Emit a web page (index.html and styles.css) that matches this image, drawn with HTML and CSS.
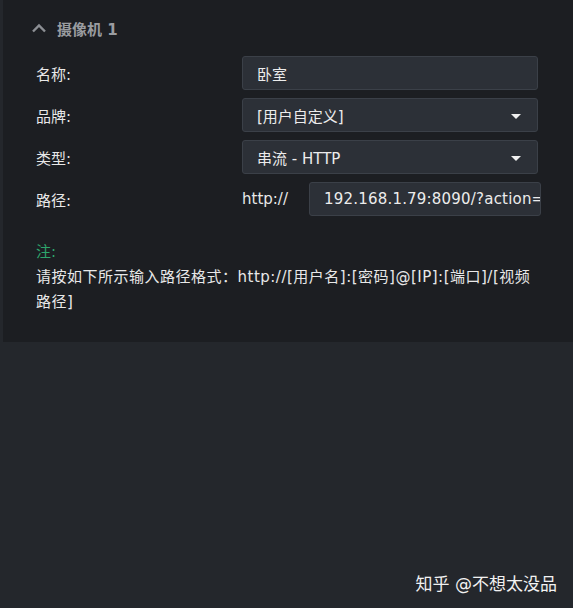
FILE: index.html
```html
<!DOCTYPE html>
<html lang="zh-CN">
<head>
    <meta charset="UTF-8">
    <title>摄像机设置</title>
    <link rel="stylesheet" href="styles.css">
</head>
<body>
    <div class="panel">
        <div class="panel-head">
            <svg class="chevron" width="16" height="10" viewBox="0 0 16 10">
                <path d="M2 8.5 L8 2.5 L14 8.5" fill="none" stroke="#8c8f94" stroke-width="2.4"/>
            </svg>
            <span class="panel-title">摄像机 1</span>
        </div>

        <div class="form">
            <label class="label">名称:</label>
            <div class="field">卧室</div>

            <label class="label">品牌:</label>
            <div class="field select">[用户自定义]<span class="caret"></span></div>

            <label class="label">类型:</label>
            <div class="field select">串流 - HTTP<span class="caret"></span></div>

            <label class="label">路径:</label>
            <div class="path-row">
                <span class="prefix">http://</span>
                <div class="field path">192.168.1.79:8090/?action=stream</div>
            </div>
        </div>

        <div class="note">
            <div class="note-title">注:</div>
            <p>请按如下所示输入路径格式：http://[用户名]:[密码]@[IP]:[端口]/[视频路径]</p>
        </div>
    </div>

    <div class="watermark">知乎 @不想太没品</div>
</body>
</html>
```

FILE: styles.css
```css
body {
    margin: 0;
    height: 608px;
    background: #24272c;
    font-family: "DejaVu Sans", "Noto Sans CJK SC", sans-serif;
    color: #e8e8e8;
    position: relative;
    overflow: hidden;
}

.panel {
    margin-left: 3px;
    height: 342px;
    box-sizing: border-box;
    background: #1c1e22;
    padding: 16px 35px 0 33px;
}

.panel-head {
    display: flex;
    align-items: center;
    height: 24px;
}

.chevron {
    margin-left: -5px;
    margin-right: 10px;
}

.panel-title {
    font-size: 15px;
    font-weight: bold;
    color: #9a9ca0;
}

.form {
    margin-top: 16px;
    display: grid;
    grid-template-columns: 206px minmax(0, 1fr);
    row-gap: 8px;
    align-items: center;
}

.label {
    font-size: 15px;
}

.field {
    height: 34px;
    box-sizing: border-box;
    background: #2c3037;
    border: 1px solid #3b4048;
    border-radius: 3px;
    padding: 0 14px;
    display: flex;
    align-items: center;
    font-size: 15px;
    color: #ececec;
    white-space: nowrap;
    overflow: hidden;
    position: relative;
}

.caret {
    position: absolute;
    right: 16px;
    top: 15px;
    width: 0;
    height: 0;
    border-left: 5px solid transparent;
    border-right: 5px solid transparent;
    border-top: 5px solid #f0f0f0;
}

.path-row {
    display: flex;
    align-items: center;
    margin-right: -3px;
}

.prefix {
    font-size: 15px;
    width: 67px;
    flex-shrink: 0;
}

.field.path {
    flex: 1;
    min-width: 0;
    padding-right: 0;
    letter-spacing: 0.2px;
}

.note {
    margin-top: 24px;
    font-size: 15px;
    line-height: 25px;
}

.note-title {
    color: #2ea56c;
}

.note p {
    margin: 0;
    letter-spacing: 0.5px;
}

.watermark {
    position: absolute;
    right: 16px;
    top: 570px;
    font-size: 17px;
    color: #f2f2f2;
}
```
